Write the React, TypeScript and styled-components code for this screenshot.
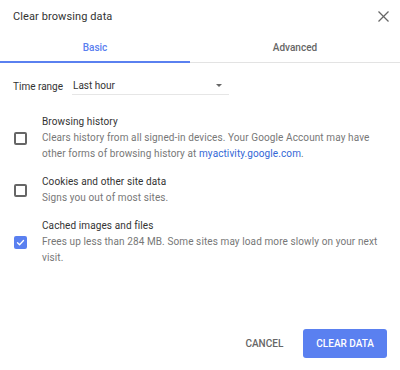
import React from "react";
import styled, { createGlobalStyle } from "styled-components";

const Global = createGlobalStyle`
  html, body { margin: 0; padding: 0; background: #fff; }
  body { font-family: Roboto, "Liberation Sans", Arial, sans-serif; -webkit-font-smoothing: antialiased; }
  * { box-sizing: border-box; }
`;

const BLUE = "rgb(90, 128, 240)";

const Dialog = styled.div`
  width: 400px;
  height: 370px;
  display: flex;
  flex-direction: column;
  background: #fff;
`;

const Header = styled.div`
  height: 33px;
  padding: 0 11px 0 13px;
  display: flex;
  align-items: center;
  justify-content: space-between;
`;

const Title = styled.div`
  font-size: 11px;
  color: #333;
  letter-spacing: 0.1px;
`;

const CloseBtn = styled.button`
  border: 0;
  background: none;
  padding: 0;
  width: 12px;
  height: 12px;
  display: flex;
  align-items: center;
  justify-content: center;
  cursor: pointer;
`;

const TabBar = styled.div`
  display: grid;
  grid-template-columns: 190px 1fr;
  box-shadow: inset 0 -1px 0 #e3e3e3;
`;

const Tab = styled.div<{ $active?: boolean }>`
  height: 30px;
  padding-bottom: 2px;
  display: flex;
  align-items: center;
  justify-content: center;
  font-size: 10px;
  font-weight: 500;
  color: ${(p) => (p.$active ? BLUE : "#666")};
  box-shadow: ${(p) => (p.$active ? `inset 0 -2px 0 ${BLUE}` : "none")};
`;

const RangeRow = styled.div`
  margin-top: 14px;
  padding-left: 13px;
  display: flex;
  align-items: center;
  font-size: 10px;
  color: #333;
`;

const Select = styled.div`
  margin-left: 9px;
  width: 157px;
  height: 18px;
  padding: 0 7px 0 1px;
  border-bottom: 1px solid #e6e6e6;
  display: flex;
  align-items: center;
  justify-content: space-between;
  color: #333;
`;

const Caret = styled.span`
  width: 0;
  height: 0;
  border-left: 3px solid transparent;
  border-right: 3px solid transparent;
  border-top: 3px solid #666;
`;

const List = styled.div`
  margin-top: 19px;
  display: flex;
  flex-direction: column;
  gap: 12px;
`;

const Item = styled.div`
  display: flex;
  align-items: center;
  padding-left: 14px;
  gap: 15px;
`;

const Box = styled.span<{ $checked?: boolean }>`
  flex: none;
  width: 13px;
  height: 13px;
  border-radius: 2px;
  border: ${(p) => (p.$checked ? "none" : "2px solid #666")};
  background: ${(p) => (p.$checked ? BLUE : "transparent")};
  display: flex;
  align-items: center;
  justify-content: center;
`;

const ItemText = styled.div`
  font-size: 10px;
  line-height: 16px;
  letter-spacing: 0.1px;
  padding-right: 12px;
`;

const ItemTitle = styled.div`
  color: #333;
`;

const ItemDesc = styled.div`
  color: #777;
`;

const Link = styled.a`
  color: #3367d6;
  text-decoration: none;
`;

const Footer = styled.div`
  margin-top: auto;
  padding: 0 13px 12px;
  display: flex;
  justify-content: flex-end;
  align-items: center;
  gap: 4px;
`;

const Button = styled.button<{ $primary?: boolean }>`
  height: 29px;
  padding: 0 ${(p) => (p.$primary ? "13px" : "16px")};
  border: 0;
  border-radius: 3px;
  font-family: Roboto, "Liberation Sans", Arial, sans-serif;
  font-size: 10px;
  font-weight: 500;
  text-transform: uppercase;
  background: ${(p) => (p.$primary ? BLUE : "transparent")};
  color: ${(p) => (p.$primary ? "#fff" : "#666")};
  cursor: pointer;
`;

const Check = () => (
  <svg width="9" height="9" viewBox="0 0 24 24" fill="none" stroke="#fff" strokeWidth="3.5" strokeLinecap="round" strokeLinejoin="round">
    <polyline points="4 12.5 9.5 18 20 6.5" />
  </svg>
);

const items = [
  {
    title: "Browsing history",
    desc: (
      <>
        Clears history from all signed-in devices. Your Google Account may have other forms of browsing history at{" "}
        <Link href="#">myactivity.google.com</Link>.
      </>
    ),
    checked: false,
  },
  { title: "Cookies and other site data", desc: "Signs you out of most sites.", checked: false },
  {
    title: "Cached images and files",
    desc: "Frees up less than 284 MB. Some sites may load more slowly on your next visit.",
    checked: true,
  },
];

export default function App() {
  return (
    <>
      <Global />
      <Dialog>
        <Header>
          <Title>Clear browsing data</Title>
          <CloseBtn aria-label="Close">
            <svg width="11" height="11" viewBox="0 0 11 11" stroke="#666" strokeWidth="1.3">
              <line x1="0.5" y1="0.5" x2="10.5" y2="10.5" />
              <line x1="10.5" y1="0.5" x2="0.5" y2="10.5" />
            </svg>
          </CloseBtn>
        </Header>
        <TabBar>
          <Tab $active>Basic</Tab>
          <Tab>Advanced</Tab>
        </TabBar>
        <RangeRow>
          Time range
          <Select>
            Last hour
            <Caret />
          </Select>
        </RangeRow>
        <List>
          {items.map((it) => (
            <Item key={it.title}>
              <Box $checked={it.checked}>{it.checked && <Check />}</Box>
              <ItemText>
                <ItemTitle>{it.title}</ItemTitle>
                <ItemDesc>{it.desc}</ItemDesc>
              </ItemText>
            </Item>
          ))}
        </List>
        <Footer>
          <Button>Cancel</Button>
          <Button $primary>Clear data</Button>
        </Footer>
      </Dialog>
    </>
  );
}
